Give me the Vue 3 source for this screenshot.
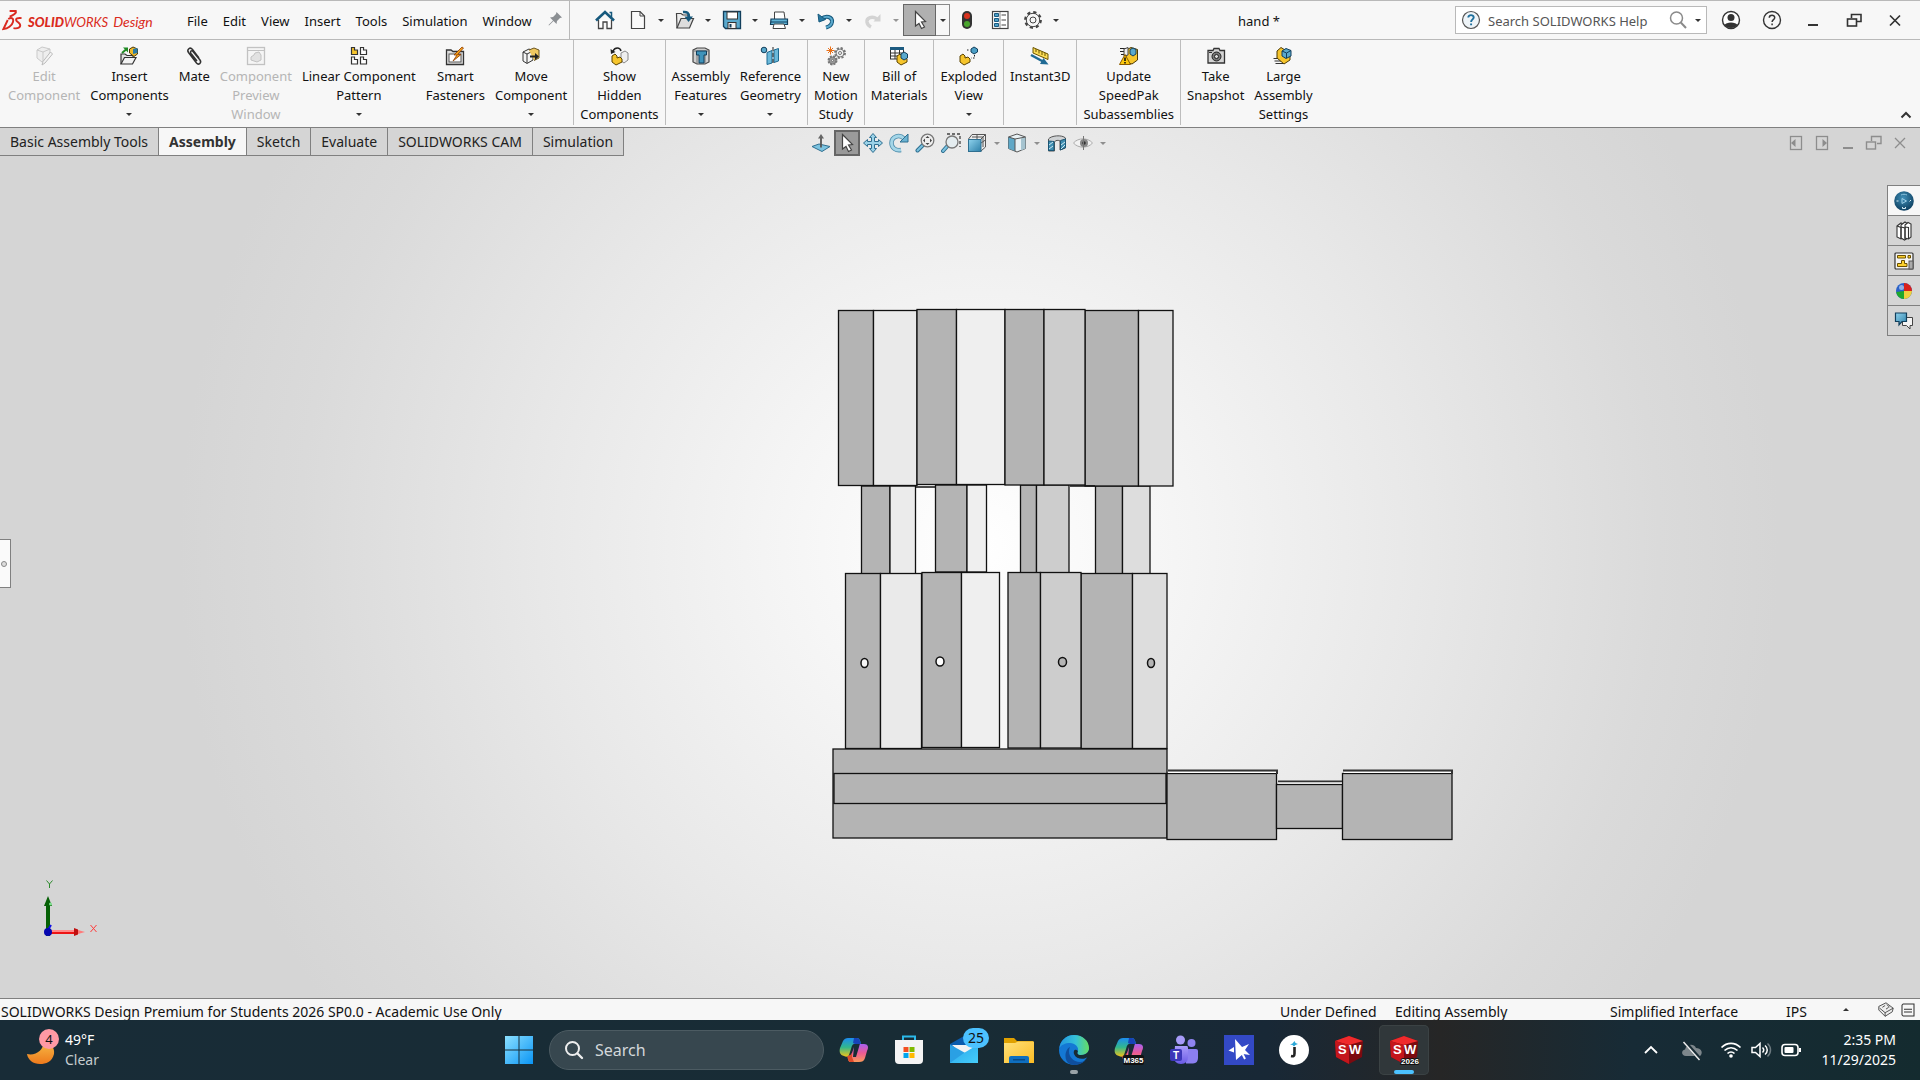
<template>
  <div class="desktop">
    <svg class="defs" aria-hidden="true">
      <defs>
        <linearGradient id="gBlue" x1="0" y1="0" x2="1" y2="1">
          <stop offset="0" stop-color="#8fd3ee" />
          <stop offset="1" stop-color="#2d7fa8" />
        </linearGradient>
        <linearGradient id="gWin" x1="0" y1="0" x2="1" y2="1">
          <stop offset="0" stop-color="#8be0ff" />
          <stop offset="1" stop-color="#0a95f5" />
        </linearGradient>
        <linearGradient id="gMoon" x1="0" y1="0" x2="0" y2="1">
          <stop offset="0" stop-color="#f7c04a" />
          <stop offset="1" stop-color="#ee7a1c" />
        </linearGradient>
        <linearGradient id="gCopA" x1="0" y1="0" x2="0" y2="1">
          <stop offset="0" stop-color="#1c8cf0" />
          <stop offset="0.5" stop-color="#32b88c" />
          <stop offset="1" stop-color="#f2c318" />
        </linearGradient>
        <linearGradient id="gCopB" x1="0" y1="0" x2="0" y2="1">
          <stop offset="0" stop-color="#a860f0" />
          <stop offset="0.5" stop-color="#ec5a94" />
          <stop offset="1" stop-color="#fb9a5a" />
        </linearGradient>
        <linearGradient id="gFolder" x1="0" y1="0" x2="1" y2="1">
          <stop offset="0" stop-color="#ffe17a" />
          <stop offset="1" stop-color="#fcbc24" />
        </linearGradient>
        <linearGradient id="gMail" x1="0" y1="0" x2="1" y2="1">
          <stop offset="0" stop-color="#2aa6ea" />
          <stop offset="1" stop-color="#45cdfa" />
        </linearGradient>
        <linearGradient id="gEdge" x1="0" y1="0" x2="1" y2="0">
          <stop offset="0" stop-color="#2296e0" />
          <stop offset="0.55" stop-color="#35c1d8" />
          <stop offset="1" stop-color="#66dc62" />
        </linearGradient>
        <linearGradient id="gTeams" x1="0" y1="0" x2="0" y2="1">
          <stop offset="0" stop-color="#a99cfa" />
          <stop offset="1" stop-color="#6a5be6" />
        </linearGradient>
        <radialGradient id="gGlobe" cx="0.45" cy="0.35" r="0.7">
          <stop offset="0" stop-color="#3f8fb8" />
          <stop offset="1" stop-color="#0b3a5a" />
        </radialGradient>
      </defs>
    </svg>

    <header class="titlebar">
      <div class="brand">
        <svg class="brand-mark" viewBox="0 0 22 24">
          <g fill="none" stroke="#da2a20" stroke-width="2">
            <path d="M8 2.5H14.5C15.5 4.5 12 7 8 8.500" />
            <path d="M6.5 11C10 9 12.5 10 11.5 14C10.500 18 6 21 1.500 21.5L6 12" />
            <path d="M20.5 10C16.5 9.5 14 10.500 15 12.500C16 14.500 20 15.500 19 18.5C18 21 15 21 12 20.5" />
          </g>
        </svg>
        <span class="brand-name"><b>SOLID</b>WORKS <span>Design</span></span>
      </div>
      <nav class="menu">
        <button v-for="m in menus" :key="m">{{ m }}</button>
        <button class="pin" aria-label="Pin menu">
          <svg viewBox="0 0 16 16" width="16" height="16">
            <path d="M9.5 1L15 6.5L13 7L10 10L9.5 13L6.5 10L2 14.5L1.5 14L6 9.5L3 6.5L6 6L9 3Z" fill="#8b8f93" />
          </svg>
        </button>
      </nav>
      <div class="quick">
        <template v-for="q in quick" :key="q.icon">
          <button :class="['quick-btn', { active: q.active }]" :aria-label="q.label">
            <svg viewBox="0 0 20 20" width="20" height="20" v-html="icons[q.icon]"></svg>
          </button>
          <button v-if="q.drop" :class="['quick-drop', { boxed: q.active, dim: q.dim }]" :aria-label="q.label + ' options'">
            <i class="caret"></i>
          </button>
        </template>
      </div>
      <h1 class="doc-title">hand *</h1>
      <label class="help-search">
        <svg viewBox="0 0 20 20" width="20" height="20">
          <circle cx="10" cy="10" r="8.5" fill="#eef4f8" stroke="#555" stroke-width="1.2" />
          <path d="M7.3 7.5C7.3 4.3 12.8 4.4 12.7 7.5C12.6 9.4 10.1 9.5 10.1 12M10.1 13.5V15.2" fill="none" stroke="#1f6f9c" stroke-width="1.9" />
        </svg>
        <input type="text" placeholder="Search SOLIDWORKS Help" aria-label="Search SOLIDWORKS Help" />
        <svg viewBox="0 0 20 20" width="20" height="20">
          <circle cx="8.5" cy="8" r="6" fill="none" stroke="#8a8a8a" stroke-width="1.5" />
          <path d="M12.8 12.5L18 18" stroke="#8a8a8a" stroke-width="2" />
        </svg>
        <i class="caret"></i>
      </label>
      <div class="window-buttons">
        <button v-for="w in windowButtons" :key="w.icon" :aria-label="w.label">
          <svg viewBox="0 0 20 20" width="20" height="20" v-html="icons[w.icon]"></svg>
        </button>
      </div>
    </header>

    <section class="ribbon">
      <div v-for="(group, i) in ribbon" :key="i" class="ribbon-group">
        <button v-for="tool in group" :key="tool.icon" class="tool" :disabled="tool.disabled">
          <svg viewBox="0 0 20 20" width="20" height="20" v-html="icons[tool.icon]"></svg>
          <span v-for="line in tool.lines" :key="line">{{ line }}</span>
          <span v-if="tool.drop" class="tool-drop"><i class="caret"></i></span>
        </button>
      </div>
      <button class="collapse" aria-label="Collapse ribbon">
        <svg viewBox="0 0 12 8" width="12" height="8">
          <path d="M1.5 6.5L6 2L10.5 6.5" fill="none" stroke="#333" stroke-width="2" />
        </svg>
      </button>
    </section>

    <main class="viewport">
      <svg class="model" viewBox="0 128 1920 870" preserveAspectRatio="xMidYMid meet">
        <g stroke="#111" stroke-width="1.3">
          <rect v-for="(f, i) in faces" :key="i" :x="f[0]" :y="f[1]" :width="f[2] - f[0]" :height="f[3] - f[1]" :fill="f[4]" />
        </g>
        <g stroke="#111" stroke-width="1.3" fill="none">
          <path d="M916 487H935M1070 486H1095" />
          <path d="M1168 770.5H1277V774M1278 781.5H1342M1343 770.5H1452V774" stroke="#333" stroke-width="2" />
          <path d="M1168 772.5H1276M1278 783H1342M1344 772.5H1451" stroke="#fff" stroke-width="1" />
        </g>
        <g stroke="#111" stroke-width="1.5">
          <ellipse cx="864.5" cy="663" rx="3.5" ry="4.5" fill="#f5f5f5" />
          <ellipse cx="940" cy="661.5" rx="4" ry="4.5" fill="#fff" />
          <ellipse cx="1062.5" cy="662" rx="4" ry="4.5" fill="#b4b4b4" />
          <ellipse cx="1151" cy="663" rx="3.5" ry="4.5" fill="#b4b4b4" />
        </g>
      </svg>

      <div class="view-head">
        <div class="tabs" role="tablist">
          <button v-for="t in tabs" :key="t" role="tab" :class="['tab', { current: t === 'Assembly' }]">{{ t }}</button>
        </div>
        <div class="hud">
          <template v-for="h in hud" :key="h.icon">
            <button :class="['hud-btn', { active: h.active }]" :aria-label="h.label">
              <svg viewBox="0 0 20 20" width="20" height="20" v-html="icons[h.icon]"></svg>
            </button>
            <i v-if="h.drop" class="caret"></i>
          </template>
        </div>
        <div class="doc-buttons">
          <button v-for="d in docButtons" :key="d.icon" :aria-label="d.label">
            <svg viewBox="0 0 20 20" width="20" height="20" v-html="icons[d.icon]"></svg>
          </button>
        </div>
      </div>

      <aside class="task-pane">
        <button v-for="(p, i) in panes" :key="p.icon" :class="{ current: i === 0 }" :aria-label="p.label">
          <svg viewBox="0 0 20 20" width="20" height="20" v-html="icons[p.icon]"></svg>
        </button>
      </aside>

      <button class="tree-handle" aria-label="Show feature tree">
        <svg viewBox="0 0 8 8" width="8" height="8">
          <circle cx="4" cy="4" r="2.5" fill="#ddd" stroke="#888" />
        </svg>
      </button>

      <svg class="triad" viewBox="0 0 70 70" width="70" height="70">
        <path d="M14.5 0.500L17.5 4V8M20.5 0.500L17.5 4" fill="none" stroke="#2c8a2c" />
        <path d="M58.500 45L64.500 52M64.500 45L58.500 52" stroke="#ff3b3b" />
        <rect x="14" y="24" width="4" height="32" fill="#056005" />
        <path d="M12 26L16 16L20 26Z" fill="#056005" />
        <circle cx="18.5" cy="24" r="1.5" fill="#7fe08f" />
        <rect x="18" y="50" width="26" height="2" fill="#ff8a8a" />
        <rect x="18" y="52" width="26" height="2" fill="#ee1515" />
        <path d="M42 48L46 49.500V54.500L42 56Z" fill="#c01010" />
        <path d="M46 50L53 52L46 54Z" fill="#ff7a7a" />
        <path d="M16 50L19 45" stroke="#1010e8" stroke-width="2" />
        <circle cx="16" cy="52" r="4" fill="#0606b0" />
      </svg>
    </main>

    <footer class="status">
      <span class="status-product">SOLIDWORKS Design Premium for Students 2026 SP0.0 - Academic Use Only</span>
      <span class="status-defined">Under Defined</span>
      <span class="status-mode">Editing Assembly</span>
      <span class="status-interface">Simplified Interface</span>
      <span class="status-units">IPS</span>
      <i class="caret up"></i>
      <svg class="status-tag" viewBox="0 0 20 20" width="18" height="18" v-html="icons.tag"></svg>
      <svg class="status-note" viewBox="0 0 20 20" width="16" height="16" v-html="icons.note"></svg>
    </footer>

    <div class="taskbar">
      <button class="weather">
        <svg viewBox="0 0 36 38" width="36" height="38">
          <path d="M3 26C11 28 20 23 20 12C27 15 31 20 30 26C28 34 22 36 16 36C9 36 4 32 3 26Z" fill="url(#gMoon)" />
          <circle cx="25" cy="11" r="10" fill="#ff99a4" />
          <text x="25" y="15.5" text-anchor="middle" font-family="Noto Sans, sans-serif" font-size="13" fill="#111">4</text>
        </svg>
        <span class="weather-text">49°F<small>Clear</small></span>
      </button>
      <div class="apps">
        <button class="app" aria-label="Start">
          <svg viewBox="0 0 30 30" width="30" height="30" v-html="icons.start"></svg>
        </button>
        <label class="search">
          <svg viewBox="0 0 20 20" width="20" height="20">
            <circle cx="8.5" cy="8.5" r="6.5" fill="none" stroke="#eee" stroke-width="2" />
            <path d="M13.5 13.5L18 18" stroke="#eee" stroke-width="2.4" stroke-linecap="round" />
          </svg>
          <input type="text" placeholder="Search" aria-label="Search" />
        </label>
        <button v-for="a in apps" :key="a.icon" :class="['app', a.state]" :aria-label="a.label">
          <svg viewBox="0 0 30 30" width="30" height="30" v-html="icons[a.icon]"></svg>
          <span v-if="a.badge" class="badge">{{ a.badge }}</span>
        </button>
      </div>
      <div class="tray">
        <button v-for="t in tray" :key="t.icon" :class="t.icon" :aria-label="t.label">
          <svg viewBox="0 0 22 22" width="22" height="22" v-html="icons[t.icon]"></svg>
        </button>
        <button class="clock">2:35 PM<br />11/29/2025</button>
      </div>
    </div>
  </div>
</template>

<script setup>
const menus = ['File', 'Edit', 'View', 'Insert', 'Tools', 'Simulation', 'Window']

const quick = [
  { icon: 'home', label: 'Home' },
  { icon: 'file', label: 'New', drop: true },
  { icon: 'open', label: 'Open', drop: true },
  { icon: 'save', label: 'Save', drop: true },
  { icon: 'print', label: 'Print', drop: true },
  { icon: 'undo', label: 'Undo', drop: true },
  { icon: 'redo', label: 'Redo', drop: true, dim: true },
  { icon: 'cursor', label: 'Select', drop: true, active: true },
  { icon: 'traffic', label: 'Rebuild' },
  { icon: 'props', label: 'File properties' },
  { icon: 'gear', label: 'Options', drop: true }
]

const windowButtons = [
  { icon: 'user', label: 'Account' },
  { icon: 'help', label: 'Help' },
  { icon: 'min', label: 'Minimize' },
  { icon: 'restore', label: 'Restore' },
  { icon: 'close', label: 'Close' }
]

const ribbon = [
  [
    { icon: 'editComp', lines: ['Edit', 'Component'], disabled: true },
    { icon: 'insertComp', lines: ['Insert', 'Components'], drop: true },
    { icon: 'mate', lines: ['Mate'] },
    { icon: 'preview', lines: ['Component', 'Preview', 'Window'], disabled: true },
    { icon: 'linear', lines: ['Linear Component', 'Pattern'], drop: true },
    { icon: 'smart', lines: ['Smart', 'Fasteners'] },
    { icon: 'move', lines: ['Move', 'Component'], drop: true }
  ],
  [{ icon: 'hidden', lines: ['Show', 'Hidden', 'Components'] }],
  [
    { icon: 'features', lines: ['Assembly', 'Features'], drop: true },
    { icon: 'refgeo', lines: ['Reference', 'Geometry'], drop: true }
  ],
  [{ icon: 'motion', lines: ['New', 'Motion', 'Study'] }],
  [{ icon: 'bom', lines: ['Bill of', 'Materials'] }],
  [{ icon: 'exploded', lines: ['Exploded', 'View'], drop: true }],
  [{ icon: 'instant', lines: ['Instant3D'] }],
  [{ icon: 'speedpak', lines: ['Update', 'SpeedPak', 'Subassemblies'] }],
  [
    { icon: 'camera', lines: ['Take', 'Snapshot'] },
    { icon: 'large', lines: ['Large', 'Assembly', 'Settings'] }
  ]
]

const tabs = ['Basic Assembly Tools', 'Assembly', 'Sketch', 'Evaluate', 'SOLIDWORKS CAM', 'Simulation']

const hud = [
  { icon: 'normal', label: 'Normal to' },
  { icon: 'cursor', label: 'Select', active: true },
  { icon: 'pan', label: 'Pan' },
  { icon: 'rotate', label: 'Rotate' },
  { icon: 'zoomFit', label: 'Zoom to fit' },
  { icon: 'zoomArea', label: 'Zoom to area' },
  { icon: 'orient', label: 'View orientation', drop: true },
  { icon: 'shaded', label: 'Display style', drop: true },
  { icon: 'section', label: 'Section view' },
  { icon: 'eye', label: 'Hide or show items', drop: true }
]

const docButtons = [
  { icon: 'paneLeft', label: 'Previous pane' },
  { icon: 'paneRight', label: 'Next pane' },
  { icon: 'minGray', label: 'Minimize document' },
  { icon: 'restoreGray', label: 'Restore document' },
  { icon: 'closeGray', label: 'Close document' }
]

const panes = [
  { icon: 'globe', label: '3DEXPERIENCE' },
  { icon: 'library', label: 'Design library' },
  { icon: 'palette', label: 'View palette' },
  { icon: 'appearance', label: 'Appearances' },
  { icon: 'forum', label: 'Forum' }
]

const apps = [
  { icon: 'copilot', label: 'Copilot' },
  { icon: 'store', label: 'Microsoft Store' },
  { icon: 'mail', label: 'Mail', badge: '25' },
  { icon: 'explorer', label: 'File Explorer' },
  { icon: 'edge', label: 'Edge', state: 'running' },
  { icon: 'm365', label: 'Microsoft 365' },
  { icon: 'teams', label: 'Teams' },
  { icon: 'star', label: 'Star' },
  { icon: 'jay', label: 'J' },
  { icon: 'sw', label: 'SOLIDWORKS' },
  { icon: 'sw26', label: 'SOLIDWORKS 2026', state: 'focused' }
]

const tray = [
  { icon: 'chevron', label: 'Show hidden icons' },
  { icon: 'cloud', label: 'OneDrive' },
  { icon: 'wifi', label: 'Network' },
  { icon: 'volume', label: 'Volume' },
  { icon: 'battery', label: 'Battery' }
]

const DARK = '#b4b4b4'

// x1, y1, x2, y2, fill
const faces = [
  // middle segments
  [861.5, 486, 890, 574, DARK],
  [890, 486, 915.5, 574, '#ebebeb'],
  [935.5, 485, 967, 572, DARK],
  [967, 485, 986.5, 572, '#efefef'],
  [1020.5, 485, 1036.5, 573, DARK],
  [1036.5, 485, 1069, 573, '#cdcdcd'],
  [1095.5, 486, 1122.5, 574, DARK],
  [1122.5, 486, 1150, 574, '#dddddd'],
  // fingertips
  [838.5, 310.5, 873.5, 485.5, DARK],
  [873.5, 310.5, 917, 485.5, '#eaeaea'],
  [1085, 310.5, 1138.5, 486, DARK],
  [1138.5, 310.5, 1173, 486, '#dddddd'],
  [917, 309.5, 956.5, 484.5, DARK],
  [956.5, 309.5, 1005, 484.5, '#efefef'],
  [1005, 309.5, 1044, 485, DARK],
  [1044, 309.5, 1085, 485, '#cdcdcd'],
  // lower segments
  [845.5, 573.5, 880.5, 748.5, DARK],
  [880.5, 573.5, 921.5, 748.5, '#eaeaea'],
  [1081, 573.5, 1132.5, 748.5, DARK],
  [1132.5, 573.5, 1167, 748.5, '#dddddd'],
  [922, 572.5, 961.5, 747.5, DARK],
  [961.5, 572.5, 999.5, 747.5, '#efefef'],
  [1008, 572.5, 1040.5, 748, DARK],
  [1040.5, 572.5, 1081, 748, '#cdcdcd'],
  // palm
  [833, 749, 1167, 838, DARK],
  [834, 773.5, 1166, 803.5, DARK],
  // thumb
  [1167, 773.5, 1276.5, 839.5, DARK],
  [1276.5, 784.5, 1342.5, 828.5, DARK],
  [1342.5, 773.5, 1452, 839.5, DARK]
]

const copilotBody =
  '<path d="M9 3H18C20 3 21 5 21.5 7L22 9H16C13 9 13 11 12 14L10 20C9 22 7 22 5 21C1 20 0 17 1 13L4 6C5 4 7 3 9 3Z" fill="url(#gCopA)"/>' +
  '<path d="M15 3H18C20 3 21 5 22 9H16L14 8Z" fill="#1743b8"/>' +
  '<path d="M21 9H25C29 9 30 12 28 16L26 23C25 26 23 27 20 27H12C9.5 27 9 25 8.5 21C11 21 12 20 13 18L15 12L14 22H17L20 12C20.5 10 20.5 9.5 21 9Z" fill="url(#gCopB)"/>' +
  '<path d="M8.5 21C11 21 12 20 13 18V22L15 27H12C9.5 27 9 25 8.5 21Z" fill="#e04a2a"/>'

const swCube =
  '<path d="M1 6L15 1L29 6L28 22L15 29L2 22Z" fill="#7c0a10"/>' +
  '<path d="M1 6L15 1L29 6L15 10Z" fill="#f02a2c"/>' +
  '<path d="M1 6L15 10V29L2 22Z" fill="#c4161c"/>' +
  '<text x="4" y="19" font-family="Liberation Sans Narrow, Liberation Sans, sans-serif" font-weight="bold" font-size="13" fill="#fff">S</text>' +
  '<text x="15" y="19" font-family="Liberation Sans Narrow, Liberation Sans, sans-serif" font-weight="bold" font-size="13" fill="#fff">W</text>'

const block = (x, y) =>
  `<path transform="translate(${x} ${y})" d="M0 3L3 1L5 3V5L8 4L10 6V9L4 12L0 9Z" fill="#f6c52c" stroke="#5b4300"/>`

const icons = {
  home: '<path d="M3.5 10V18.5H8V12H12V18.5H16.5V10" fill="#fff" stroke="#444" stroke-width="1.3"/><path d="M1 10.5L10 2L19 10.5" fill="none" stroke="#16597d" stroke-width="2.6"/><path d="M14.5 2.5H16.5V7" stroke="#16597d" stroke-width="1.5" fill="none"/>',
  file: '<path d="M3.5 1.5H12L16.5 6V18.5H3.5Z" fill="#fafafa" stroke="#444" stroke-width="1.2"/><path d="M12 1.5V6H16.5" fill="none" stroke="#444"/>',
  open: '<path d="M2 18L1.5 3.5H6L8 5H13V9" fill="#eee" stroke="#444" stroke-width="1.2"/><path d="M2 18L6 8.5H18.5L14.5 18Z" fill="#ddd" stroke="#444" stroke-width="1.2"/><path d="M8 2C12 1.5 14 3 14 7" fill="none" stroke="#16597d" stroke-width="2.5"/><path d="M9.5 6.5H18L13.5 12Z" fill="#16597d"/>',
  save: '<path d="M1.5 1.5H18.5V18.5H3.5L1.5 16.5Z" fill="#5aa9cd" stroke="#123f5c" stroke-width="1.3"/><rect x="5" y="2" width="10.5" height="7" fill="#fff" stroke="#333"/><rect x="6" y="12.5" width="8" height="6" fill="#f4f4f4" stroke="#333"/><rect x="7.5" y="14" width="2" height="3.5" fill="#123f5c"/>',
  print: '<path d="M5.5 9V2H15L16 9" fill="#fff" stroke="#444"/><path d="M2 9H18.5V14.5H1.5Z" fill="#5fb3d6" stroke="#123f5c" stroke-width="1.2"/><path d="M2 12H18" stroke="#123f5c"/><path d="M5 14H15L16.5 18.5H4Z" fill="#fff" stroke="#444"/>',
  undo: '<path d="M5 9.5C10 4.5 16.5 7 16 12C15.5 15.5 12 17 10 17.5" fill="none" stroke="#16597d" stroke-width="4"/><path d="M5 9.5C10 4.5 16.5 7 16 12C15.5 15.5 12 17 10 17.5" fill="none" stroke="#5aa9cd" stroke-width="2"/><path d="M2 4L3 12L9.5 9.5Z" fill="#2878a0" stroke="#16597d"/>',
  redo: '<path d="M14 9C9 5.5 3.5 8 4 12C4.5 15 6 16 8 17" fill="none" stroke="#d3d3d3" stroke-width="3.5"/><path d="M17.5 4V11.5H10.5Z" fill="#d3d3d3"/>',
  cursor: '<path d="M5.5 1.5L15.5 11.5L11.5 12L14.5 17L11.5 18.5L9 13.5L5.5 16Z" fill="#fff" stroke="#444" stroke-width="1.2"/>',
  traffic: '<rect x="5" y="1" width="10" height="18" rx="5" fill="#333"/><circle cx="10" cy="6" r="3" fill="#d8321e"/><circle cx="10" cy="14" r="3" fill="#4aa52e"/>',
  props: '<rect x="2.5" y="1.5" width="15.5" height="17" fill="#fff" stroke="#444" stroke-width="1.2"/><path d="M10 2V18" stroke="#888"/><path d="M4.500 3.5H8.500V6.500H4.500ZM4.500 8.500H8.500V11.500H4.500ZM4.500 13.500H8.500V16.500H4.500Z" fill="#4b9fc6" stroke="#1c5a80"/><path d="M11.5 5H16M11.5 10H16M11.5 15H16" stroke="#444" stroke-width="1.2"/>',
  gear: '<g fill="none" stroke="#444"><circle cx="10" cy="10" r="7.8" stroke-width="2.2" stroke-dasharray="3.2 2.93"/><circle cx="10" cy="10" r="6.7" fill="#f7f7f7"/><circle cx="10" cy="10" r="3"/></g>',
  user: '<circle cx="10" cy="10" r="8.5" fill="#fff" stroke="#333" stroke-width="1.4"/><circle cx="10" cy="7.5" r="3.5" fill="#333"/><path d="M3.5 15C5 11.5 15 11.5 16.5 15C14 19 6 19 3.5 15Z" fill="#333"/>',
  help: '<circle cx="10" cy="10" r="8.5" fill="none" stroke="#333" stroke-width="1.4"/><path d="M7.3 7.8C7.3 4.5 12.8 4.6 12.7 7.7C12.6 9.7 10.1 9.7 10.1 12M10.1 13.5V15.2" fill="none" stroke="#333" stroke-width="1.5"/>',
  min: '<path d="M5 15H15" stroke="#333" stroke-width="2"/>',
  restore: '<path d="M7.5 8V4.5H17V11.5H13" fill="none" stroke="#333" stroke-width="1.6"/><rect x="3.5" y="9" width="9" height="7" fill="none" stroke="#333" stroke-width="1.6"/>',
  close: '<path d="M5 5.5L15 15.5M15 5.5L5 15.5" stroke="#333" stroke-width="1.7"/>',
  editComp: '<path d="M3 4L8 1L16 3V8L14 12L8 16L3 12Z" fill="#eee" stroke="#c9c9c9"/><path d="M3 4L9 6L16 3M9 6V15" stroke="#c9c9c9" fill="none"/><path d="M16.5 6L18.5 8L11 17L8 19L9 15.5Z" fill="#f4f4f4" stroke="#bbb"/>',
  insertComp: '<path d="M2 18V8H6L8 9.5H14V11" fill="#e2e2e2" stroke="#333" stroke-width="1.2"/><path d="M2 18L5.5 11.5H17L13.5 18Z" fill="#f3f3f3" stroke="#333" stroke-width="1.2"/><path d="M3 7L7 3.5" stroke="#1f8a24" stroke-width="2"/><path d="M4 1.5H9V6.5Z" fill="#1f8a24"/><path d="M10.500 3L14 1L18.5 3V8L15 10.5L10.500 7Z" fill="#f0b928" stroke="#4d3a05"/><path d="M14 3L18.5 2V7L14 8Z" fill="#2b7ba6"/>',
  mate: '<path d="M15 12L8.5 3.5C6 0.5 2.5 3.5 4.5 6.5L12.5 17C14.5 19.5 18 17 16 14L9 5.5C7.5 4 5.5 5.5 7 7.5L13 15" fill="none" stroke="#333" stroke-width="1.5"/>',
  preview: '<rect x="1.5" y="1.5" width="17" height="17" fill="#f5f5f5" stroke="#c2c2c2" stroke-width="1.3"/><path d="M2 4.5H18" stroke="#c2c2c2"/><path d="M5 11L8 9L9 7L13 6L15 9V14L11 16L5 14Z" fill="#e2e2e2" stroke="#c2c2c2"/>',
  linear: '<g stroke="#333" stroke-width="1.2" fill="#fff"><path d="M2.5 1.5H5.5V4H8.5V8.5H2.5Z" fill="#f6c52c"/><path d="M11.5 1.5H14.5V4H17.5V8.5H11.5Z"/><path d="M2.5 11H5.5V13.5H8.5V18H2.5Z"/><path d="M11.5 11H14.5V13.5H17.5V18H11.5Z"/></g>',
  smart: '<path d="M1.5 18.5V4H6L8 5.5H18.5V18.5Z" fill="#dedede" stroke="#333" stroke-width="1.3"/><rect x="4" y="8" width="12" height="8" fill="#fff" stroke="#555"/><path d="M17 1L9 9H12L8 15L16 8.5H12.5L18.5 2Z" fill="#f7a21b" stroke="#8a3a00" stroke-width="0.8"/>',
  move: '<path d="M2 6L8 3L12 5V14L6 17.5L2 15Z" fill="#f4f4f4" stroke="#333"/><path d="M2 6L6 8L12 5M6 8V17" fill="none" stroke="#333"/><path d="M8 4L13 2L18 4V12L13 14.5" fill="#f0c860" stroke="#6b5520"/><path d="M9 9.5H14V7L18 10.5L14 14V11.5H9Z" fill="#222"/>',
  hidden: '<path d="M12 7L16 5L19 7V14L15 17L12 15Z" fill="#eee" stroke="#888"/>' + block(3, 7) + '<path d="M4 5C6 1 11 1 12 5" fill="none" stroke="#222" stroke-width="1.5"/><path d="M1.5 3L6.5 6L2 8Z" fill="#222"/>',
  features: '<path d="M2 4L6 2H14L18 4V16L14 18H6L2 16Z" fill="#cfcfcf" stroke="#444" stroke-width="1.2"/><path d="M2 5H18M6 9V18M14 9V18" stroke="#777"/><path d="M5.500 5H15.500V9H13V17H8V9H5.500Z" fill="#3f93ba" stroke="#123f5c"/>',
  refgeo: '<circle cx="4" cy="4" r="2.8" fill="#5aa9cd" stroke="#123f5c"/><path d="M7 6.500L12 4.500V17L7 18.5ZM14 4L18.5 2.500V15L14 16.500Z" fill="#6bb9da" stroke="#1c6a92"/><path d="M13 1V19" stroke="#222" stroke-dasharray="4 2"/>',
  motion: '<g fill="none" stroke="#777"><circle cx="14" cy="7" r="5" stroke-width="2" stroke-dasharray="2.2 1.73"/><circle cx="14" cy="7" r="4" fill="#eee"/><circle cx="14" cy="7" r="1.5" fill="#fff"/><circle cx="6.5" cy="14.5" r="4" stroke-width="2" stroke-dasharray="2 1.14"/><circle cx="6.5" cy="14.5" r="3.5" fill="#999"/><circle cx="6.5" cy="14.5" r="1" fill="#eee"/></g><path d="M4.5 0.5V8.5M0.5 4.5H8.5M2 2L7 7M7 2L2 7" stroke="#e8701a"/>',
  bom: '<rect x="1.5" y="1.5" width="13" height="11.5" fill="#fff" stroke="#333"/><rect x="1" y="1" width="14" height="3" fill="#1c5a80"/><path d="M6 4V13M10.5 4V13M1.5 7H14M1.5 10H14" stroke="#333"/>' + block(8, 7) + '<path d="M12 8L15 6L18.5 8V12L15 14L12 12Z" fill="#5aa9cd" stroke="#123f5c"/>',
  exploded: block(1, 7) + '<path d="M12 3L15 1L18.5 3V6L15 8L12 6Z" fill="#4b9fc6" stroke="#123f5c"/><path d="M8 4H11M15.5 9V12H12" fill="none" stroke="#222" stroke-dasharray="1.5 1.5"/>',
  instant: '<path d="M3 1.5L18 8V13.5L3 7Z" fill="#fbdc55" stroke="#6b5500"/><path d="M6 3V6M9 4V7.5M12 5.5V9M15 7V10" stroke="#6b5500"/><path d="M1 9L13 15.5" stroke="#1f6a94" stroke-width="2.5"/><path d="M10 18L18.5 18.5L13.5 12Z" fill="#1f6a94"/>',
  speedpak: '<path d="M1 2.5H8M1 5.5H6M2 8.500H5" stroke="#222"/><path d="M7 4L12 1.5L18.5 3.5V14L13 18L7 16Z" fill="#f6c52c" stroke="#4d3a05"/><path d="M5 3L9 1.500V9L5 10Z" fill="#eee" stroke="#444"/><path d="M11 3.500L14 2L17 3.500V8L14 10L11 8Z" fill="#5aa9cd" stroke="#123f5c"/><path d="M6 8.5L11.5 18.5H0.5Z" fill="#fcc90e" stroke="#8a5a00"/><path d="M6 11.5V15M6 16V17.500" stroke="#111" stroke-width="1.6"/>',
  camera: '<path d="M2 4.5H7L8 2.5H13L14 4.5H18.5V17H2Z" fill="#d4d4d4" stroke="#333" stroke-width="1.3"/><circle cx="10.5" cy="10.5" r="4.5" fill="#777" stroke="#222"/><circle cx="10.5" cy="10.5" r="2" fill="#ddd" stroke="#222"/><path d="M3 6.5H6" stroke="#333"/>',
  large: '<path d="M0.5 12.5H6M1.5 15H8M2.5 17.5H10" stroke="#333"/><path d="M4 5L8 1.5L12 4L17 7V14L11 18L4 12Z" fill="#f6c52c" stroke="#4d3a05"/><path d="M9 5L13 2.5L18 4.5V10L13 12.5L9 10Z" fill="#5aa9cd" stroke="#123f5c"/><path d="M9 5L13.5 7L18 4.5M13.5 7V12" stroke="#123f5c" fill="none"/>',
  normal: '<path d="M1 13.500L8 11L19 13.500L11 18.500Z" fill="#7cc3e0" stroke="#2f6f90"/><path d="M10 14.500V4" stroke="#555" stroke-width="1.8"/><path d="M7 5.500L10 1L13 5.500Z" fill="#666"/>',
  pan: '<path d="M10 0.5L13.5 4.5H11.5V8.5H15.5V6.5L19.5 10L15.5 13.5V11.5H11.5V15.5H13.5L10 19.5L6.5 15.5H8.5V11.5H4.5V13.5L0.5 10L4.5 6.5V8.5H8.5V4.5H6.5Z" fill="#9ad2e8" stroke="#2f6f90"/>',
  rotate: '<path d="M15 5.5C10 0.5 2.5 4 2.5 10C2.5 15 7 18 12 17" fill="none" stroke="#4f8dac" stroke-width="4.5"/><path d="M15 5.5C10 0.5 2.5 4 2.5 10C2.5 15 7 18 12 17" fill="none" stroke="#a4d6e8" stroke-width="2.8"/><path d="M19 1V9H11Z" fill="#6bb3d2" stroke="#2f6f90"/>',
  zoomFit: '<path d="M8 12L2.5 17.5" stroke="#2f6f90" stroke-width="4" stroke-linecap="round"/><path d="M8 12L2.5 17.5" stroke="#7cc3e0" stroke-width="2" stroke-linecap="round"/><circle cx="12.5" cy="7.5" r="6.3" fill="#eee" stroke="#777" stroke-width="1.3"/><path d="M12.5 3L14.5 5H10.5ZM12.5 12L10.5 10H14.5ZM8 7.5L10 5.5V9.5ZM17 7.5L15 9.5V5.5Z" fill="#444"/>',
  zoomArea: '<path d="M6 1H19V14" fill="none" stroke="#444" stroke-width="1.3" stroke-dasharray="3 2"/><path d="M6 13.5L2 18" stroke="#2f6f90" stroke-width="4" stroke-linecap="round"/><path d="M6 13.5L2 18" stroke="#7cc3e0" stroke-width="2" stroke-linecap="round"/><circle cx="11" cy="9" r="6" fill="#e4ecef" stroke="#777" stroke-width="1.3"/>',
  orient: '<path d="M5 1.5H18.5V14M5 1.5L1.5 6M18.5 1.5L14 6M18.5 14L14 18M10 1.5V6M18.5 7L14 10M5 4H16V14" fill="#eee" stroke="#555"/><rect x="1.5" y="6.5" width="12.5" height="12" fill="url(#gBlue)" stroke="#2f6f90"/>',
  shaded: '<path d="M1.5 4L10 1L18.5 4V15.5L10 19L1.5 15.5Z" fill="#e8f1f4" stroke="#555"/><path d="M1.5 4L8 6V18L1.5 15.5Z" fill="#5ea8c7"/><path d="M14 5.5L18.5 4V15.5L14 17.5Z" fill="#a6c4d0"/><path d="M1.5 4L8 6L18.5 4M8 6V18" fill="none" stroke="#555"/>',
  section: '<path d="M1.5 6C4 2.5 15 1.5 18.5 5V15L13 17V8C12 7 8 7 7.5 9V18L1.5 18Z" fill="#cfd2d4" stroke="#555"/><path d="M1.5 8L7 8.5V17.5H1.5Z" fill="#3e8db0" stroke="#1b5574"/><path d="M13.5 7.5L18.5 6V14.5L13.5 17Z" fill="#3e8db0" stroke="#1b5574"/><path d="M2 12L6 9M2 16L6 13M14 12L18 9M14 16L18 12" stroke="#cfe8f2"/>',
  eye: '<path d="M0.5 10C5 4.500 15 4.500 19.5 10C15 15.500 5 15.500 0.5 10Z" fill="#f2f2f2" stroke="#aaa"/><circle cx="11" cy="10" r="4" fill="#888"/><circle cx="11" cy="10" r="1.8" fill="#333"/><path d="M10.500 3V17" stroke="#777"/>',
  paneLeft: '<rect x="4.5" y="3.5" width="11" height="13" fill="none" stroke="#8d8d8d" stroke-width="1.3"/><path d="M9.5 6V14L5 10Z" fill="#8d8d8d"/>',
  paneRight: '<rect x="4.5" y="3.5" width="11" height="13" fill="none" stroke="#8d8d8d" stroke-width="1.3"/><path d="M10.5 6V14L15 10Z" fill="#8d8d8d"/>',
  minGray: '<path d="M5 15H15" stroke="#8d8d8d" stroke-width="2"/>',
  restoreGray: '<path d="M7.5 8V3.5H17V10.5H13" fill="none" stroke="#8d8d8d" stroke-width="1.4"/><rect x="2.5" y="9" width="9" height="7" fill="none" stroke="#8d8d8d" stroke-width="1.4"/>',
  closeGray: '<path d="M5 5L15 15M15 5L5 15" stroke="#8d8d8d" stroke-width="1.3"/>',
  globe: '<circle cx="10" cy="10" r="9.8" fill="url(#gGlobe)"/><path d="M8 7.5V12.5L12.5 10Z" fill="none" stroke="#9fd0e8"/><path d="M2.500 10H4.500M15.500 10.500L17 9M8.500 16V17.500H11.500V16" fill="none" stroke="#d7ecf5"/><path d="M7 4C9 3 11 3 13 4" stroke="#8cc4de" fill="none"/>',
  library: '<g fill="#fff" stroke="#333" stroke-width="1.1"><path d="M3 5L7 2L11 4V16L7 18L3 16Z"/><path d="M7 4L11 1L14 3V17L10.5 19L7 17Z"/><path d="M11 4L14 1.5L17 3V16L14.5 18L11 17Z"/><path d="M3 5L7 6.5V18M7 6L11 7V18M11 6L14.5 6.5V18" fill="none"/></g>',
  palette: '<rect x="1" y="2" width="18" height="16" rx="1" fill="#f4f4f4" stroke="#333" stroke-width="1.2"/><path d="M3.500 4.500H11.500V7H3.500ZM14 4.500H16.500V7H14ZM7.500 9.500H10.500V12.500H13V15.500H3.500V12.500H7.500Z" fill="#fbd02d" stroke="#6b5000"/><rect x="15" y="10" width="4" height="8" fill="#aaa" stroke="#555"/>',
  appearance: '<circle cx="10" cy="10" r="8" fill="#2a62c8"/><path d="M10 10V2A8 8 0 0 1 18 10Z" fill="#d9211c"/><path d="M10 10H18A8 8 0 0 1 10 18Z" fill="#f0d13c"/><path d="M10 10V18A8 8 0 0 1 2.2 11Z" fill="#1fa82c"/><circle cx="7.5" cy="6.5" r="2.5" fill="#fff" opacity="0.5"/>',
  forum: '<path d="M8.5 6.5H18.5V14.5H16V18L12.5 14.5H8.5Z" fill="#f4f4f4" stroke="#444"/><path d="M1.5 2H12.5V10.5H8L5 14V10.5H1.5Z" fill="url(#gBlue)" stroke="#123f5c" stroke-width="1.2"/>',
  tag: '<path d="M2 6L10 2L18 8L17 12L9 17L2 10Z" fill="#eee" stroke="#444"/><path d="M9 13L18 8M9 13V17M3 8L9 13M6 7L9 5M10 9L13 7M11 4L14 7" stroke="#444" fill="none"/>',
  note: '<path d="M4 2.5H17.5V17.5H4L2.5 16V4Z" fill="#f7f7f7" stroke="#333" stroke-width="1.3"/><path d="M5 9H15M5 12.5H15" stroke="#333" stroke-width="1.3"/>',
  start: '<path d="M1 1H14.5V14.5H1ZM15.5 1H29V14.5H15.5ZM1 15.5H14.5V29H1ZM15.5 15.5H29V29H15.5Z" fill="url(#gWin)"/>',
  copilot: copilotBody,
  store: '<path d="M9 7V1.5H21V7" fill="none" stroke="#2bb9ea" stroke-width="2"/><path d="M1 5H29V25Q29 29 25 29H5Q1 29 1 25Z" fill="#f4f4f4"/><path d="M9.5 12H14.5V17H9.5Z" fill="#f25022"/><path d="M15.5 12H20.5V17H15.5Z" fill="#7fba00"/><path d="M9.5 18H14.5V23H9.5Z" fill="#00a4ef"/><path d="M15.5 18H20.5V23H15.5Z" fill="#ffb900"/>',
  mail: '<path d="M1 9L15 1L29 9V20H1Z" fill="#0b5cad"/><path d="M3 10H27L15 22Z" fill="#f3f3f3"/><path d="M1 9.5L18 19L29 28H1Z" fill="#2aa0e4"/><path d="M29 9.5L15 18L1 28H29Z" fill="url(#gMail)"/>',
  explorer: '<path d="M0 3H10L13 6H29V14H0Z" fill="#e0a100"/><path d="M0 8H11L14 6.5H30V28H0Z" fill="url(#gFolder)"/><path d="M5 28V22.5Q5 21 7 21H23Q25 21 25 22.5V28Z" fill="#0f6fc0"/><path d="M9 24H21V25.5H9Z" fill="#0a4a86"/>',
  edge: '<circle cx="15" cy="15" r="15" fill="#1478d4"/><path d="M0.5 13C1 6 7 0 15 0C24 0 30 6 30 13C30 18 26 20 22 20C18 20 18 18 19 16C20 12 16 8 11 8C6 8 2 10 0.5 13Z" fill="url(#gEdge)"/><path d="M11 12C8 18 12 27 21 27C24 27 26 26 28 23C24 30 16 31 11 29C4 26 6 14 11 12Z" fill="#0f4f9e"/><path d="M19 16C18 18 18 20 22 20C26 20 28.500 18.500 30 15V22L28 22.500C24 25 17 24 15 19C14 15.500 16 13 19 16Z" fill="#182b34"/>',
  m365: copilotBody + '<rect x="9" y="20" width="21" height="10" rx="2" fill="#111"/><text x="19.5" y="28" text-anchor="middle" font-family="Liberation Sans, sans-serif" font-weight="bold" font-size="8" fill="#fff">M365</text>',
  teams: '<circle cx="11.5" cy="5" r="4.5" fill="#a79bf8"/><circle cx="22.5" cy="8" r="4" fill="#8f84f0"/><path d="M17 14H27Q29 14 29 16V23Q29 28 24 28.5H17Z" fill="#8b7ff0"/><path d="M6 11H18Q19 11 19 13V22Q19 29 12 29Q5 29 5 22Z" fill="url(#gTeams)"/><rect x="1" y="14" width="12" height="12" rx="2" fill="#3c37b8"/><text x="7" y="24" text-anchor="middle" font-family="Liberation Sans, sans-serif" font-weight="bold" font-size="10" fill="#fff">T</text>',
  star: '<rect width="30" height="30" fill="#3349c6"/><path d="M11 4L18 12L25 9L21 15L26 20L19 19L12 25Z" fill="#fff"/><path d="M4.500 15.500L10 12V17.500Z" fill="#fff"/><path d="M18 18L21 24" stroke="#fff" stroke-width="2"/>',
  jay: '<circle cx="15" cy="15" r="15" fill="#fff"/><path d="M15.5 12V18.500C15.500 21 14.500 21.500 12 21" fill="none" stroke="#222" stroke-width="2.600"/><path d="M15.500 6L16.5 8L19 9L16.500 10L15 11.500L13.500 10L11 9.500L13.500 8.500Z" fill="#2aa8d8"/>',
  sw: swCube,
  sw26: swCube + '<text x="21" y="29" text-anchor="middle" font-family="Liberation Sans, sans-serif" font-weight="bold" font-size="8" fill="#fff" stroke="#111" stroke-width="2" paint-order="stroke">2026</text>',
  chevron: '<path d="M5 14L11 8L17 14" fill="none" stroke="#fff" stroke-width="1.8"/>',
  cloud: '<path d="M5 17C0 17 0 11 4 10.5C5 5 13 4 15 9C20 9 22 13 20 16L19 17Z" fill="#7d868b"/><path d="M3 2L19 20" stroke="#182b34" stroke-width="3.5"/><path d="M2.5 3L18.5 21" stroke="#eee" stroke-width="1.5"/>',
  wifi: '<g fill="none" stroke="#fff" stroke-width="1.7"><path d="M1.5 8.5C7 3 15 3 20.5 8.5"/><path d="M4.5 11.5C8.5 7.8 13.5 7.8 17.5 11.5"/><path d="M7.5 14.5C9.5 12.5 12.5 12.5 14.5 14.5"/></g><circle cx="11" cy="17" r="1.8" fill="#fff"/>',
  volume: '<path d="M2 8.5H5.5L10 4.5V17.5L5.5 13.5H2Z" fill="none" stroke="#fff" stroke-width="1.5"/><path d="M12.5 8.5C14 10 14 12 12.5 13.5M15 6.5C18 9 18 13 15 15.5" fill="none" stroke="#fff" stroke-width="1.5"/><path d="M17.5 4.5C21.5 8 21.5 14 17.5 17.5" fill="none" stroke="#6d7a80" stroke-width="1.5"/>',
  battery: '<rect x="2" y="5.5" width="16" height="11" rx="3" fill="none" stroke="#fff" stroke-width="1.6"/><rect x="4.5" y="8" width="9" height="6" rx="1" fill="#fff"/><path d="M20 9V13" stroke="#fff" stroke-width="2"/>'
}
</script>

<style>
body {
  margin: 0;
  background: #d5d5d5;
}
</style>

<style scoped>
.desktop {
  display: flex;
  flex-direction: column;
  min-height: 100vh;
  font-family: "Noto Sans", "Open Sans", sans-serif;
  font-size: 13px;
  color: #111;
}

.defs {
  position: absolute;
  width: 0;
  height: 0;
}

button {
  font: inherit;
  color: inherit;
  background: none;
  border: none;
  padding: 0;
  margin: 0;
}

svg {
  display: block;
  flex-shrink: 0;
}

.caret {
  display: block;
  width: 0;
  height: 0;
  border: 3px solid transparent;
  border-top-color: #333;
  border-bottom: none;
}

.caret.up {
  border-top: none;
  border-bottom: 3px solid #333;
}

/* title bar */
.titlebar {
  display: flex;
  align-items: center;
  height: 38px;
  background: #f7f7f7;
  border-top: 1px solid #b9b9b9;
  border-bottom: 1px solid #b9b9b9;
}

.brand {
  display: flex;
  align-items: center;
  gap: 5px;
  width: 187px;
  padding-left: 2px;
  box-sizing: border-box;
  color: #da2a20;
}

.brand-mark {
  width: 21px;
  height: 24px;
}

.brand-name {
  font-family: Lato, sans-serif;
  font-style: italic;
  font-size: 13px;
  line-height: 16px;
  padding-top: 4px;
}

.brand-name b {
  font-weight: 900;
}

.brand-name span {
  margin-left: 2px;
  font-size: 14px;
}

.menu {
  display: flex;
  align-items: center;
  gap: 15px;
  width: 383px;
  height: 100%;
  border-right: 1px solid #b9b9b9;
  padding-top: 2px;
  box-sizing: border-box;
}

.menu .pin {
  margin-bottom: 4px;
}

.quick {
  display: flex;
  align-items: center;
  padding-left: 18px;
}

.quick-btn {
  display: flex;
  align-items: center;
  justify-content: center;
  width: 33px;
  height: 32px;
  box-sizing: border-box;
}

.quick-btn.active {
  background: #b0b0b0;
  border: 1px solid #666;
}

.quick-drop {
  display: flex;
  align-items: center;
  justify-content: center;
  width: 14px;
  height: 32px;
  box-sizing: border-box;
}

.quick-drop.boxed {
  border: 1px solid #888;
  border-left: none;
}

.quick-drop.dim {
  opacity: 0.5;
}

.doc-title {
  flex: 1;
  margin: 0;
  padding-top: 2px;
  font-size: 13px;
  font-weight: 400;
  text-align: center;
}

.help-search {
  display: flex;
  align-items: center;
  gap: 7px;
  width: 252px;
  height: 28px;
  padding: 0 5px;
  box-sizing: border-box;
  background: #fff;
  border: 1px solid #b9b9b9;
}

.help-search input {
  flex: 1;
  min-width: 0;
  padding: 2px 0 0;
  border: none;
  background: none;
  font: inherit;
}

.help-search input::placeholder {
  color: #555;
  opacity: 1;
}

.window-buttons {
  display: flex;
  padding: 0 5px 0 3px;
}

.window-buttons button {
  display: flex;
  justify-content: center;
  width: 41px;
}

/* ribbon */
.ribbon {
  display: flex;
  height: 87px;
  background: #f7f7f7;
  border-bottom: 1px solid #808080;
}

.ribbon-group {
  display: flex;
  gap: 10px;
  padding: 6px 6px 0;
  margin-bottom: 2px;
  border-right: 1px solid #bdbdbd;
}

.ribbon-group:first-child {
  padding-left: 8px;
}

.ribbon-group:nth-last-child(2) {
  border-right: none;
}

.tool {
  display: flex;
  flex-direction: column;
  align-items: center;
  line-height: 19px;
  white-space: nowrap;
}

.tool svg {
  margin-bottom: 1px;
}

.tool:disabled {
  color: #b5b5b5;
}

.tool-drop {
  display: flex;
  align-items: center;
  height: 19px;
}

.collapse {
  margin: auto 8px 8px auto;
}

/* graphics area */
.viewport {
  position: relative;
  flex: 1;
  display: flex;
  flex-direction: column;
  background: radial-gradient(circle 800px at 51% 48%, #ffffff 0%, #f4f4f4 27%, #e8e8e8 55%, #dadada 85%, #d5d5d5 100%);
}

.model {
  position: absolute;
  inset: 0;
  width: 100%;
  height: 100%;
}

.view-head {
  position: relative;
  display: flex;
  justify-content: space-between;
  height: 28px;
}

.tabs {
  display: flex;
  flex: 1;
}

.tab {
  padding: 0 10px;
  font-size: 14px;
  white-space: nowrap;
  color: #222;
  background: #d5d5d5;
  border-right: 1px solid #808080;
  border-bottom: 1px solid #808080;
}

.tab.current {
  font-weight: 700;
  color: #333;
  background: #f7f7f7;
}

.hud {
  display: flex;
  align-items: center;
  padding: 2px 0 0 4px;
}

.hud-btn {
  display: flex;
  align-items: center;
  justify-content: center;
  width: 26px;
  height: 26px;
  box-sizing: border-box;
}

.hud-btn.active {
  background: #9a9a9a;
  border: 2px solid #666;
}

.hud .caret {
  margin: 0 4px;
  opacity: 0.5;
}

.doc-buttons {
  display: flex;
  flex: 1;
  align-items: center;
  justify-content: flex-end;
  padding: 2px 7px 0 0;
}

.doc-buttons button {
  display: flex;
  justify-content: center;
  width: 26px;
}

.task-pane {
  position: relative;
  align-self: flex-end;
  width: 32px;
  margin-top: 29px;
  border-top: 1px solid #808080;
  border-left: 1px solid #808080;
}

.task-pane button {
  display: flex;
  align-items: center;
  justify-content: center;
  width: 100%;
  height: 30px;
  box-sizing: border-box;
  border-bottom: 1px solid #808080;
}

.task-pane button.current {
  background: #f7f7f7;
}

.tree-handle {
  position: absolute;
  left: 0;
  top: 411px;
  width: 11px;
  height: 49px;
  background: #fafafa;
  border: 1px solid #808080;
  border-left: none;
}

.triad {
  position: absolute;
  left: 32px;
  bottom: 48px;
}

/* status bar */
.status {
  display: flex;
  align-items: center;
  height: 21px;
  padding: 0 4px 0 1px;
  background: #f7f7f7;
  border-top: 1px solid #808080;
  font-size: 14px;
  line-height: 18px;
  overflow: hidden;
  white-space: nowrap;
}

.status span {
  padding-top: 5px;
}

.status-product {
  flex: 1;
}

.status-defined {
  width: 115px;
}

.status-mode {
  width: 215px;
}

.status-interface {
  width: 176px;
}

.status-units {
  width: 57px;
}

.status-tag {
  margin: 0 5px 0 28px;
}

/* taskbar */
.taskbar {
  display: flex;
  align-items: center;
  height: 60px;
  background: linear-gradient(90deg, #182c37 0%, #182c35 50%, #182836 66%, #262626 75%, #172b36 85%, #142b2f 100%);
  color: #fff;
  font-size: 14px;
}

.weather {
  display: flex;
  align-items: center;
  flex: 1;
  gap: 5px;
  padding-left: 24px;
  margin-bottom: 6px;
  text-align: left;
}

.weather-text {
  padding-top: 6px;
  line-height: 20px;
}

.weather-text small {
  display: block;
  font-size: inherit;
  color: #c5cccf;
}

.apps {
  display: flex;
  align-items: center;
  gap: 5px;
  padding-left: 3px;
}

.app {
  position: relative;
  display: flex;
  align-items: center;
  justify-content: center;
  width: 50px;
  height: 50px;
  border-radius: 5px;
  box-sizing: border-box;
}

.app.focused {
  background: #30373a;
  box-shadow: inset 0 0 0 1px #3b4244;
}

.app.running::after,
.app.focused::after {
  content: "";
  position: absolute;
  bottom: 1px;
  left: 50%;
  width: 8px;
  height: 4px;
  margin-left: -4px;
  border-radius: 2px;
  background: #9aa3a8;
}

.app.focused::after {
  width: 20px;
  margin-left: -10px;
  background: #4cc2ff;
}

.badge {
  position: absolute;
  top: 3px;
  right: 0;
  padding: 0 5px;
  border-radius: 10px;
  background: #4cc2ff;
  color: #111;
  font-size: 14px;
  line-height: 20px;
}

.search {
  display: flex;
  align-items: center;
  gap: 11px;
  width: 275px;
  height: 40px;
  padding: 0 14px;
  box-sizing: border-box;
  border: 1px solid #4c5b62;
  border-radius: 20px;
  background: #37474f;
}

.search input {
  flex: 1;
  min-width: 0;
  padding: 0;
  border: none;
  background: none;
  font: inherit;
  font-size: 16px;
  color: #fff;
}

.search input::placeholder {
  color: #d3d8da;
  opacity: 1;
}

.tray {
  display: flex;
  flex: 1;
  align-items: center;
  justify-content: flex-end;
  padding-right: 24px;
}

.tray .cloud {
  margin: 0 17px 0 19px;
}

.tray .volume {
  margin: 0 8px;
}

.clock {
  margin-left: 20px;
  text-align: right;
  line-height: 20px;
}
</style>
